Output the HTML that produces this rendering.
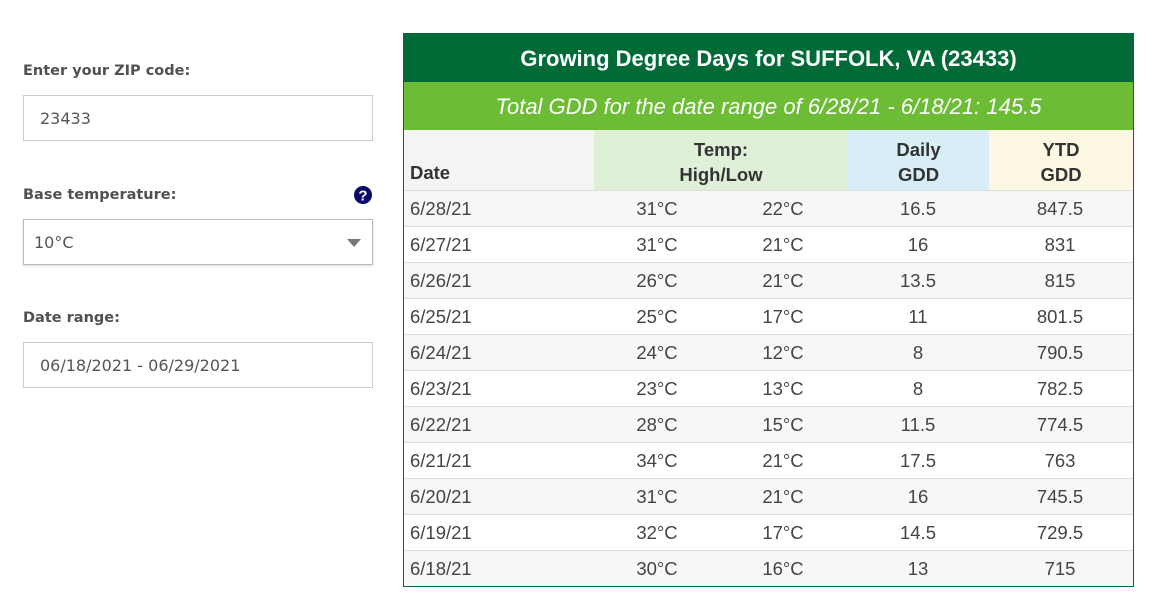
<!DOCTYPE html>
<html><head><meta charset="utf-8"><style>
*{margin:0;padding:0;box-sizing:border-box}
body{width:1176px;height:606px;background:#fff;position:relative;overflow:hidden;font-family:"DejaVu Sans","Liberation Sans",sans-serif;color:#444}
.lbl{position:absolute;left:23px;font-size:14.5px;font-weight:bold;color:#505050;font-family:"DejaVu Sans",sans-serif}
.inp{position:absolute;left:23px;width:350px;height:46px;border:1px solid #ccc;font-size:16px;color:#555;padding-left:16px;line-height:46px}
.n{font-family:"Liberation Sans",sans-serif}
#t{position:absolute;left:403px;top:33px;width:731px;height:554px;border:1px solid #006b36}
.ab{position:absolute}
.row{position:absolute;left:0;width:729px;height:36px;border-top:1px solid #ddd;font-size:18.5px;color:#444;line-height:36px}
.row span{position:absolute;text-align:center;width:120px}
</style></head><body>
<div class="lbl" style="top:63px">Enter your ZIP code:</div>
<div class="inp" style="top:95px">23433</div>
<div class="lbl" style="top:187px">Base temperature:</div>
<svg style="position:absolute;left:354px;top:186px" width="18" height="18" viewBox="0 0 18 18"><circle cx="9" cy="9" r="9" fill="#0a0a6b"/><text x="9" y="14.5" text-anchor="middle" font-size="15" font-weight="bold" fill="#fff" font-family="Liberation Sans,sans-serif">?</text></svg>
<div class="inp" style="top:219px;padding-left:10px;border-color:#bbb;box-shadow:0 1px 2px rgba(0,0,0,.15)">10°C<div style="position:absolute;right:11px;top:19px;width:0;height:0;border-left:7px solid transparent;border-right:7px solid transparent;border-top:8px solid #777"></div></div>
<div class="lbl" style="top:310px">Date range:</div>
<div class="inp" style="top:342px">06/18/2021 - 06/29/2021</div>

<div id="t" class="n">
<div class="ab" style="left:0;top:0;width:729px;height:48px;background:#006b37;color:#fff;font-weight:bold;font-size:22px;text-align:center;line-height:50px">Growing Degree Days for SUFFOLK, VA (23433)</div>
<div class="ab" style="left:0;top:48px;width:729px;height:48px;background:#6cbd35;color:#fff;font-style:italic;font-size:22px;text-align:center;line-height:50px">Total GDD for the date range of 6/28/21 - 6/18/21: 145.5</div>
<div class="ab" style="left:0;top:96px;width:190px;height:60px;background:#f4f4f4"></div>
<div class="ab" style="left:190px;top:96px;width:254px;height:60px;background:#dff0d8"></div>
<div class="ab" style="left:444px;top:96px;width:141px;height:60px;background:#d9edf7"></div>
<div class="ab" style="left:585px;top:96px;width:144px;height:60px;background:#fcf8e3"></div>
<div class="ab" style="left:6px;top:128px;font-weight:bold;font-size:18.5px;color:#333">Date</div>
<div class="ab" style="left:190px;top:103px;width:254px;text-align:center;font-weight:bold;font-size:18.5px;color:#333;line-height:25px">Temp:<br>High/Low</div>
<div class="ab" style="left:444px;top:103px;width:141px;text-align:center;font-weight:bold;font-size:18.5px;color:#333;line-height:25px">Daily<br>GDD</div>
<div class="ab" style="left:585px;top:103px;width:144px;text-align:center;font-weight:bold;font-size:18.5px;color:#333;line-height:25px">YTD<br>GDD</div>
<div class="row" style="top:156px;background:#f7f7f7"><span style="left:6px;text-align:left">6/28/21</span><span style="left:193px">31°C</span><span style="left:319px">22°C</span><span style="left:454px">16.5</span><span style="left:596px">847.5</span></div>
<div class="row" style="top:192px;background:#fff"><span style="left:6px;text-align:left">6/27/21</span><span style="left:193px">31°C</span><span style="left:319px">21°C</span><span style="left:454px">16</span><span style="left:596px">831</span></div>
<div class="row" style="top:228px;background:#f7f7f7"><span style="left:6px;text-align:left">6/26/21</span><span style="left:193px">26°C</span><span style="left:319px">21°C</span><span style="left:454px">13.5</span><span style="left:596px">815</span></div>
<div class="row" style="top:264px;background:#fff"><span style="left:6px;text-align:left">6/25/21</span><span style="left:193px">25°C</span><span style="left:319px">17°C</span><span style="left:454px">11</span><span style="left:596px">801.5</span></div>
<div class="row" style="top:300px;background:#f7f7f7"><span style="left:6px;text-align:left">6/24/21</span><span style="left:193px">24°C</span><span style="left:319px">12°C</span><span style="left:454px">8</span><span style="left:596px">790.5</span></div>
<div class="row" style="top:336px;background:#fff"><span style="left:6px;text-align:left">6/23/21</span><span style="left:193px">23°C</span><span style="left:319px">13°C</span><span style="left:454px">8</span><span style="left:596px">782.5</span></div>
<div class="row" style="top:372px;background:#f7f7f7"><span style="left:6px;text-align:left">6/22/21</span><span style="left:193px">28°C</span><span style="left:319px">15°C</span><span style="left:454px">11.5</span><span style="left:596px">774.5</span></div>
<div class="row" style="top:408px;background:#fff"><span style="left:6px;text-align:left">6/21/21</span><span style="left:193px">34°C</span><span style="left:319px">21°C</span><span style="left:454px">17.5</span><span style="left:596px">763</span></div>
<div class="row" style="top:444px;background:#f7f7f7"><span style="left:6px;text-align:left">6/20/21</span><span style="left:193px">31°C</span><span style="left:319px">21°C</span><span style="left:454px">16</span><span style="left:596px">745.5</span></div>
<div class="row" style="top:480px;background:#fff"><span style="left:6px;text-align:left">6/19/21</span><span style="left:193px">32°C</span><span style="left:319px">17°C</span><span style="left:454px">14.5</span><span style="left:596px">729.5</span></div>
<div class="row" style="top:516px;background:#f7f7f7"><span style="left:6px;text-align:left">6/18/21</span><span style="left:193px">30°C</span><span style="left:319px">16°C</span><span style="left:454px">13</span><span style="left:596px">715</span></div>
</div>
</body></html>
